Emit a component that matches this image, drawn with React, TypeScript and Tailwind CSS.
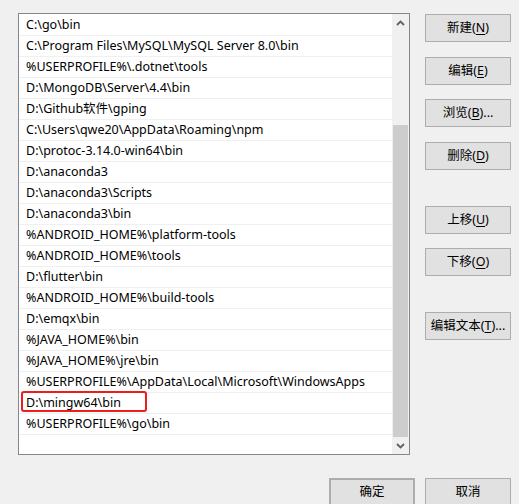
const paths = [
  'C:\\go\\bin',
  'C:\\Program Files\\MySQL\\MySQL Server 8.0\\bin',
  '%USERPROFILE%\\.dotnet\\tools',
  'D:\\MongoDB\\Server\\4.4\\bin',
  'D:\\Github软件\\gping',
  'C:\\Users\\qwe20\\AppData\\Roaming\\npm',
  'D:\\protoc-3.14.0-win64\\bin',
  'D:\\anaconda3',
  'D:\\anaconda3\\Scripts',
  'D:\\anaconda3\\bin',
  '%ANDROID_HOME%\\platform-tools',
  '%ANDROID_HOME%\\tools',
  'D:\\flutter\\bin',
  '%ANDROID_HOME%\\build-tools',
  'D:\\emqx\\bin',
  '%JAVA_HOME%\\bin',
  '%JAVA_HOME%\\jre\\bin',
  '%USERPROFILE%\\AppData\\Local\\Microsoft\\WindowsApps',
  'D:\\mingw64\\bin',
  '%USERPROFILE%\\go\\bin',
];

const sideButtons = [
  { label: '新建', key: 'N', tail: '', mt: 'mt-[1px]' },
  { label: '编辑', key: 'E', tail: '', mt: 'mt-[15px]' },
  { label: '浏览', key: 'B', tail: '...', mt: 'mt-[14px]' },
  { label: '删除', key: 'D', tail: '', mt: 'mt-[15px]' },
  { label: '上移', key: 'U', tail: '', mt: 'mt-[36px]' },
  { label: '下移', key: 'O', tail: '', mt: 'mt-[14px]' },
  { label: '编辑文本', key: 'T', tail: '...', mt: 'mt-[36px]' },
];

function Chevron({ up }: { up?: boolean }) {
  return (
    <svg width="9" height="6" viewBox="0 0 9 6" className={up ? '' : 'rotate-180'}>
      <path d="M1 5 L4.5 1.5 L8 5" fill="none" stroke="#606060" strokeWidth="1.8" />
    </svg>
  );
}

function WinButton({ children, className = '' }: { children: React.ReactNode; className?: string }) {
  return (
    <div
      className={`flex h-[28px] w-[86px] items-center justify-center border border-[#adadad] bg-[#e1e1e1] text-[12.5px] text-black ${className}`}
    >
      {children}
    </div>
  );
}

export default function App() {
  return (
    <div
      className="h-[504px] w-[519px] overflow-hidden bg-[#f0f0f0] pl-[18px] pt-[13px]"
      style={{ fontFamily: '"Noto Sans", "Noto Sans CJK SC", sans-serif' }}
    >
      <div className="flex">
        <div className="flex h-[442px] w-[392px] border border-[#828790] bg-white">
          <div className="flex w-[373px] flex-col pt-[1px]">
            {paths.map((p, i) => (
              <div
                key={p}
                className="relative flex h-[21px] items-center border-b border-[#f0f0f0] pl-[7px] pt-[1px] text-[12.5px] leading-none text-black"
              >
                {p}
                {i === 18 && (
                  <div className="absolute left-[2px] top-[-2px] h-[21px] w-[126px] rounded-[3px] border-2 border-[#ee1c1c]" />
                )}
              </div>
            ))}
          </div>
          <div className="flex w-[17px] flex-col bg-[#f0f0f0]">
            <div className="flex h-[17px] items-center justify-center">
              <Chevron up />
            </div>
            <div className="h-[94px]" />
            <div className="mx-[1px] flex-1 bg-[#cdcdcd]" />
            <div className="flex h-[17px] items-center justify-center">
              <Chevron />
            </div>
          </div>
        </div>
        <div className="ml-[15px] flex flex-col">
          {sideButtons.map((b) => (
            <WinButton key={b.label} className={b.mt}>
              {b.label}(<span className="underline underline-offset-2">{b.key}</span>){b.tail}
            </WinButton>
          ))}
        </div>
      </div>
      <div className="mt-[23px] flex justify-end gap-[10px] pr-[8px]">
        <WinButton className="border-2 border-[#0078d7]">确定</WinButton>
        <WinButton>取消</WinButton>
      </div>
    </div>
  );
}
